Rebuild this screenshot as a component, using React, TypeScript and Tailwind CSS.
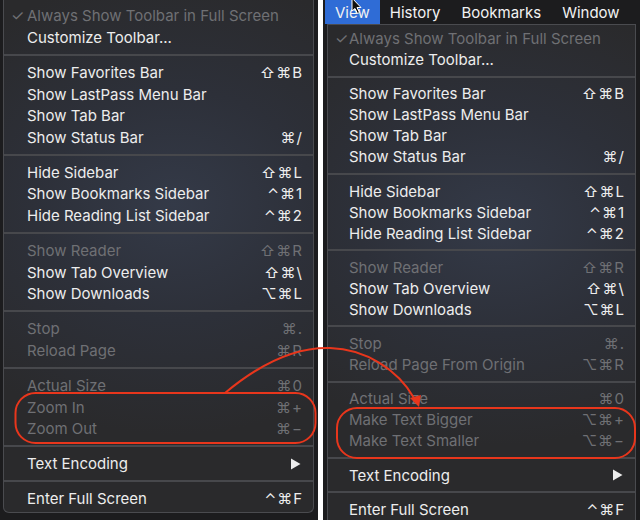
import React from "react";

type Item =
  | { sep: true }
  | { label: string; keys?: string; off?: boolean; check?: boolean; sub?: boolean };

const left: Item[] = [
  { label: "Always Show Toolbar in Full Screen", off: true, check: true },
  { label: "Customize Toolbar..." },
  { sep: true },
  { label: "Show Favorites Bar", keys: "⇧⌘B" },
  { label: "Show LastPass Menu Bar" },
  { label: "Show Tab Bar" },
  { label: "Show Status Bar", keys: "⌘/" },
  { sep: true },
  { label: "Hide Sidebar", keys: "⇧⌘L" },
  { label: "Show Bookmarks Sidebar", keys: "⌃⌘1" },
  { label: "Hide Reading List Sidebar", keys: "⌃⌘2" },
  { sep: true },
  { label: "Show Reader", keys: "⇧⌘R", off: true },
  { label: "Show Tab Overview", keys: "⇧⌘\\" },
  { label: "Show Downloads", keys: "⌥⌘L" },
  { sep: true },
  { label: "Stop", keys: "⌘.", off: true },
  { label: "Reload Page", keys: "⌘R", off: true },
  { sep: true },
  { label: "Actual Size", keys: "⌘0", off: true },
  { label: "Zoom In", keys: "⌘+", off: true },
  { label: "Zoom Out", keys: "⌘−", off: true },
  { sep: true },
  { label: "Text Encoding", sub: true },
  { sep: true },
  { label: "Enter Full Screen", keys: "⌃⌘F" },
];

const right: Item[] = [
  { label: "Always Show Toolbar in Full Screen", off: true, check: true },
  { label: "Customize Toolbar..." },
  { sep: true },
  { label: "Show Favorites Bar", keys: "⇧⌘B" },
  { label: "Show LastPass Menu Bar" },
  { label: "Show Tab Bar" },
  { label: "Show Status Bar", keys: "⌘/" },
  { sep: true },
  { label: "Hide Sidebar", keys: "⇧⌘L" },
  { label: "Show Bookmarks Sidebar", keys: "⌃⌘1" },
  { label: "Hide Reading List Sidebar", keys: "⌃⌘2" },
  { sep: true },
  { label: "Show Reader", keys: "⇧⌘R", off: true },
  { label: "Show Tab Overview", keys: "⇧⌘\\" },
  { label: "Show Downloads", keys: "⌥⌘L" },
  { sep: true },
  { label: "Stop", keys: "⌘.", off: true },
  { label: "Reload Page From Origin", keys: "⌥⌘R", off: true },
  { sep: true },
  { label: "Actual Size", keys: "⌘0", off: true },
  { label: "Make Text Bigger", keys: "⌥⌘+", off: true },
  { label: "Make Text Smaller", keys: "⌥⌘−", off: true },
  { sep: true },
  { label: "Text Encoding", sub: true },
  { sep: true },
  { label: "Enter Full Screen", keys: "⌃⌘F" },
];

function Menu({ items, tight }: { items: Item[]; tight?: boolean }) {
  return (
    <div className="flex flex-col">
      {items.map((it, i) =>
        "sep" in it ? (
          <div key={i} className={`flex items-center ${tight ? "h-[13.3px]" : "h-[13.5px]"}`}>
            <div className="h-[2px] w-full bg-[#47484c]" />
          </div>
        ) : (
          <div
            key={i}
            className={`relative flex items-center justify-between pr-[10px] ${
              tight ? "h-[21px] pl-[21px]" : "h-[21.6px] pl-[23px]"
            } ${it.off ? "text-[#6f7074]" : "text-[#ededed]"}`}
          >
            {it.check && <span className="absolute left-[7px] text-[15px]">✓</span>}
            <span>{it.label}</span>
            {it.keys && <span className="tracking-[1px]">{it.keys}</span>}
            {it.sub && (
              <svg width="11" height="12" viewBox="0 0 11 12" className="mr-[2px]">
                <path d="M1 0.5 L10.5 6 L1 11.5 Z" fill="#ededed" />
              </svg>
            )}
          </div>
        )
      )}
    </div>
  );
}

const bg =
  "bg-[radial-gradient(ellipse_90%_45%_at_55%_40%,#343a48_0%,#2d3039_50%,#2a2a2c_100%)]";

export default function App() {
  return (
    <div
      className="relative flex w-[640px] h-[520px] overflow-hidden bg-white text-[15px] leading-none"
      style={{ fontFamily: "Inter, 'DejaVu Sans', sans-serif" }}
    >
      {/* left shot */}
      <div className="w-[318px] h-full bg-[#1c1c1e] pl-[3px] pr-[4px]">
        <div className={`h-[513px] pt-[5px] rounded-b-[6px] border-x border-b border-[#4a4b4f] ${bg}`}>
          <Menu items={left} />
        </div>
      </div>

      <div className="w-[5px] h-full bg-white" />

      {/* right shot */}
      <div className="flex-1 h-full bg-[#1c1c1e] flex flex-col">
        <div className="h-[26px] flex items-stretch text-[#f2f2f2] text-[15px]">
          <div className="flex items-center bg-[#2f6cd6] pt-[1px] pl-[10px] pr-[10px] ml-[2px]">View</div>
          <span className="flex items-center pt-[1px] ml-[10px]">History</span>
          <span className="flex items-center pt-[1px] ml-[21px]">Bookmarks</span>
          <span className="flex items-center pt-[1px] ml-[21px]">Window</span>
        </div>
        <div className="flex-1 pl-[4px] pr-[4px]">
          <div className={`h-full pt-[3px] border-x border-t border-[#4a4b4f] ${bg}`}>
            <Menu items={right} tight />
          </div>
        </div>
      </div>

      {/* annotations */}
      <svg className="absolute inset-0 pointer-events-none" width="640" height="520" viewBox="0 0 640 520">
        <rect x="15.5" y="393" width="300" height="50" rx="20" fill="none" stroke="#e8361c" strokeWidth="2" />
        <rect x="337" y="408" width="298" height="50" rx="20" fill="none" stroke="#e8361c" strokeWidth="2" />
        <path
          d="M225 393 C262 362 296 347 330 348 C366 349 398 370 414 398"
          fill="none"
          stroke="#e8361c"
          strokeWidth="2"
        />
        <path d="M410 398 L421 395 L419 407 Z" fill="#e8361c" />
        <path
          d="M352 -2 L352 11 L355 8.5 L357.5 13.5 L359.5 12.5 L357 7.5 L361 7.5 Z"
          fill="#111"
          stroke="#fff"
          strokeWidth="1"
        />
      </svg>
    </div>
  );
}
